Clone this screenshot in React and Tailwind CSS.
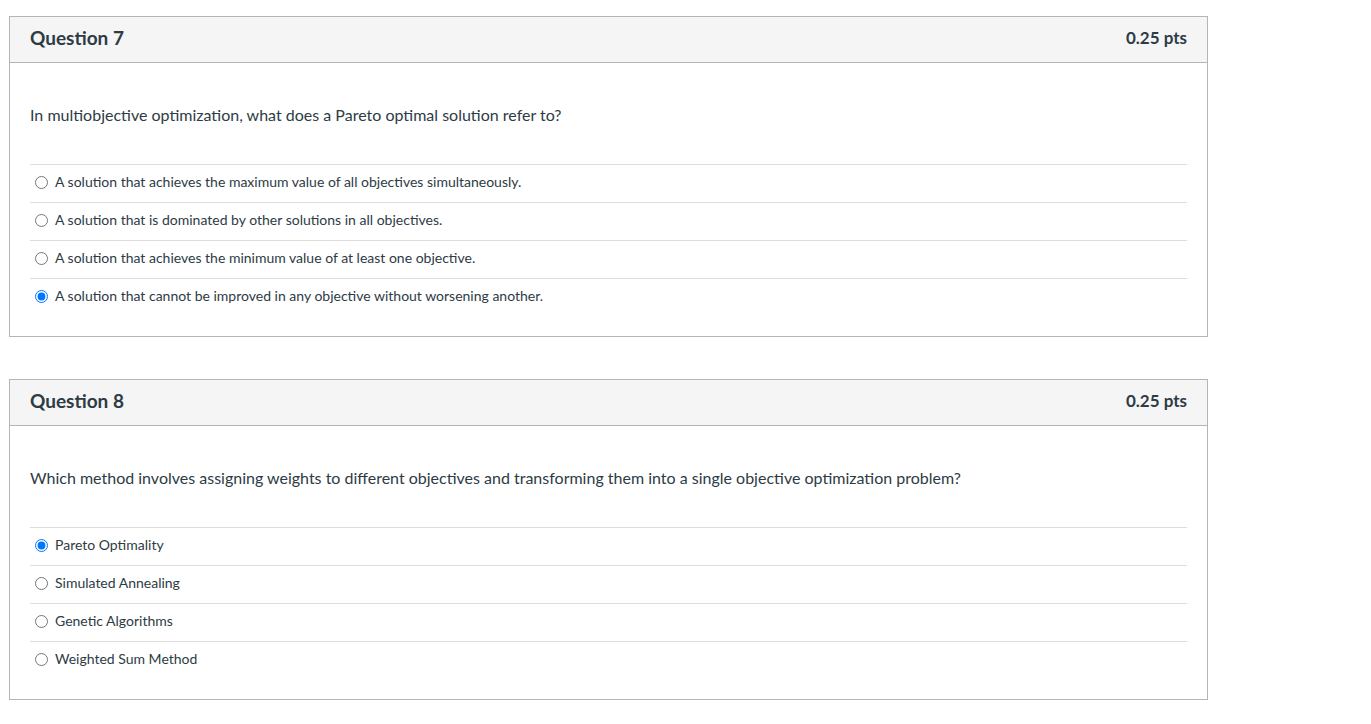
const questions = [
  {
    id: 7,
    points: "0.25 pts",
    text: "In multiobjective optimization, what does a Pareto optimal solution refer to?",
    answers: [
      "A solution that achieves the maximum value of all objectives simultaneously.",
      "A solution that is dominated by other solutions in all objectives.",
      "A solution that achieves the minimum value of at least one objective.",
      "A solution that cannot be improved in any objective without worsening another.",
    ],
    selected: 3,
  },
  {
    id: 8,
    points: "0.25 pts",
    text: "Which method involves assigning weights to different objectives and transforming them into a single objective optimization problem?",
    answers: [
      "Pareto Optimality",
      "Simulated Annealing",
      "Genetic Algorithms",
      "Weighted Sum Method",
    ],
    selected: 0,
  },
];

function QuestionCard({ q }) {
  return (
    <div className="w-[1199px] border border-[#b5b5b5] bg-white">
      {/* header */}
      <div className="flex h-[46px] items-center justify-between border-b border-[#b5b5b5] bg-[#f5f5f5] px-5 pb-[3px]">
        <h2 className="text-[19px] font-bold text-[#2d3b45]">Question {q.id}</h2>
        <span className="text-[17px] font-bold text-[#2d3b45]">{q.points}</span>
      </div>

      {/* body */}
      <div className="px-5 pt-[40px] pb-5">
        <p className="text-[16px] leading-6 text-[#2d3b45]">{q.text}</p>
        <div className="mt-[37px]">
          {q.answers.map((a, i) => (
            <label
              key={i}
              className="flex h-[38px] items-center border-t border-[#dddddd] text-[14px] text-[#2d3b45]"
            >
              <input
                type="radio"
                name={`q${q.id}`}
                defaultChecked={i === q.selected}
                className="mr-[7px] ml-[5px] -mt-[2px] h-[13px] w-[13px]"
              />
              <span className="-mt-[4px]">{a}</span>
            </label>
          ))}
        </div>
      </div>
    </div>
  );
}

export default function App() {
  return (
    <div
      className="min-h-screen bg-white pt-4 pl-[9px]"
      style={{ fontFamily: "Lato, 'Liberation Sans', sans-serif" }}
    >
      <div className="flex flex-col gap-[42px]">
        {questions.map((q) => (
          <QuestionCard key={q.id} q={q} />
        ))}
      </div>
    </div>
  );
}
